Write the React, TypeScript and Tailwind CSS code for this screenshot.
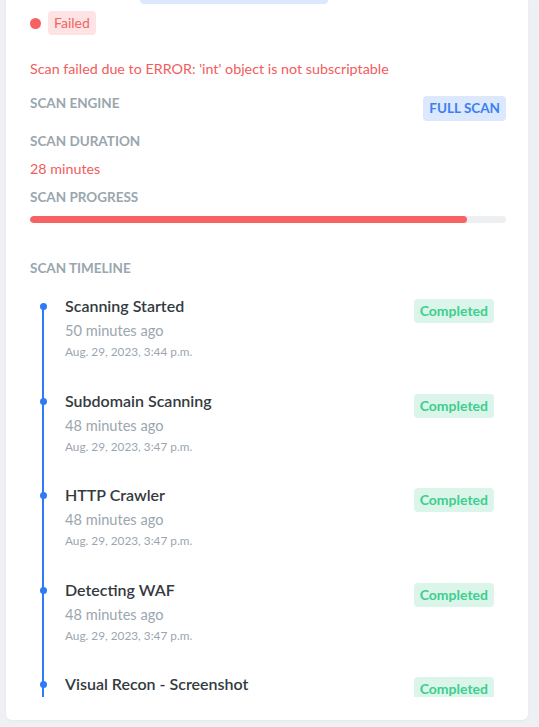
import React from "react";

const items = [
  { title: "Scanning Started", ago: "50 minutes ago", date: "Aug. 29, 2023, 3:44 p.m." },
  { title: "Subdomain Scanning", ago: "48 minutes ago", date: "Aug. 29, 2023, 3:47 p.m." },
  { title: "HTTP Crawler", ago: "48 minutes ago", date: "Aug. 29, 2023, 3:47 p.m." },
  { title: "Detecting WAF", ago: "48 minutes ago", date: "Aug. 29, 2023, 3:47 p.m." },
  { title: "Visual Recon - Screenshot", ago: "", date: "" },
];

export default function App() {
  return (
    <div
      className="w-[539px] h-[727px] bg-[#eef0f4] overflow-hidden"
      style={{ fontFamily: "Lato, 'Open Sans', sans-serif" }}
    >
      <div className="ml-[6px] w-[522px] h-[720px] bg-white rounded-b-[6px] shadow-[0_1px_3px_rgba(0,0,0,0.04)] pl-[24px] pr-[22px]">
        <div className="ml-[110px] w-[188px] h-[4px] bg-[#dce8fd] rounded-b-[4px]" />
        <div className="mt-[7px] h-[24px] flex items-center gap-[7px]">
          <div className="w-[11px] h-[11px] rounded-full bg-[#f86161]" />
          <div className="h-[24px] px-[6px] rounded-[4px] bg-[#fde3e3] text-[#f26565] text-[14px] leading-[24px]">
            Failed
          </div>
        </div>
        <div className="mt-[24px] text-[14.3px] leading-[20px] text-[#f25c5c]">
          Scan failed due to ERROR: 'int' object is not subscriptable
        </div>
        <div className="mt-[14px] h-[28px] flex items-start justify-between">
          <div className="text-[13.5px] leading-[20px] font-bold text-[#9aa6ae] uppercase">Scan Engine</div>
          <div className="mt-[3px] h-[25px] px-[6px] rounded-[4px] bg-[#dce8fd] text-[#3b80f0] text-[13.5px] leading-[25px] font-bold">
            FULL SCAN
          </div>
        </div>
        <div className="mt-[10px] text-[13.5px] leading-[20px] font-bold text-[#9aa6ae] uppercase">Scan Duration</div>
        <div className="mt-[8px] text-[14.3px] leading-[20px] text-[#f25c5c]">28 minutes</div>
        <div className="mt-[8px] text-[13.5px] leading-[20px] font-bold text-[#9aa6ae] uppercase">Scan Progress</div>
        <div className="mt-[9px] h-[7px] rounded-full bg-[#eeeff1] overflow-hidden">
          <div className="h-full rounded-full bg-[#f86262]" style={{ width: "91.8%" }} />
        </div>
        <div className="mt-[35px] text-[13.5px] leading-[20px] font-bold text-[#9aa6ae] uppercase">Scan Timeline</div>
        <div className="mt-[17px] h-[402px] overflow-hidden pr-[12px]">
          <div className="relative">
            <div className="absolute left-[12px] top-[11px] w-[2px] h-[500px] bg-[#2f7bf5]" />
            {items.map((it, i) => (
              <div key={i} className="relative h-[94.5px] pl-[35px] flex justify-between">
                <div className="absolute left-[9.5px] top-[8px] w-[7px] h-[7px] rounded-full bg-[#2f7bf5]" />
                <div>
                  <div className="text-[16px] leading-[22px] font-semibold text-[#343a40]">{it.title}</div>
                  {it.ago && (
                    <>
                      <div className="mt-[4px] text-[14.6px] leading-[20px] text-[#9ba6af]">{it.ago}</div>
                      <div className="mt-[3px] text-[11.8px] leading-[16px] text-[#9ba6af]">{it.date}</div>
                    </>
                  )}
                </div>
                <div className="mt-[4px] h-[24px] px-[6px] rounded-[4px] bg-[#dbf5eb] text-[#3ccf8e] text-[14px] leading-[24px] font-bold">
                  Completed
                </div>
              </div>
            ))}
          </div>
        </div>
      </div>
    </div>
  );
}
